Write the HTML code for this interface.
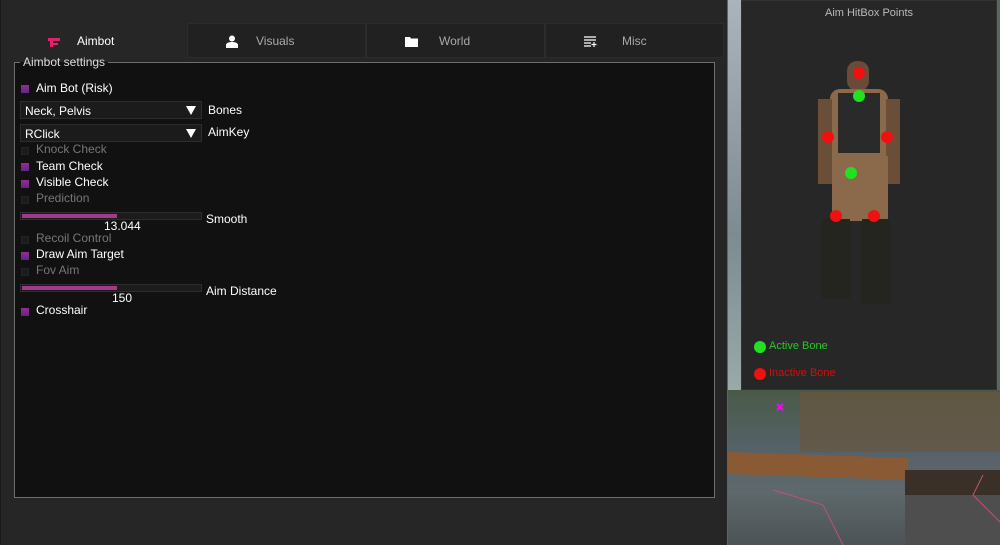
<!DOCTYPE html>
<html><head><meta charset="utf-8"><style>
*{margin:0;padding:0;box-sizing:border-box}
body{width:1000px;height:545px;overflow:hidden;position:relative;background:#5a6660;font-family:"Liberation Sans",sans-serif;font-size:12px;color:#fff}
.abs{position:absolute}
#main{left:0;top:0;width:727px;height:545px;background:#262626;border-left:1px solid #1a1a1a}
.tab{position:absolute;top:23px;height:35px;background:#212121;border:1px solid #2c2c2c;color:#aaa;font-size:12px}
.tab span{position:absolute;top:10px}
#grp{left:14px;top:62px;width:701px;height:436px;background:#111;border:1px solid #6e6e6e}
#grpt{left:20px;top:55px;padding:0 3px;font-size:12px;color:#ddd;background:linear-gradient(#262626 50%,#111 50%)}
.cb{position:absolute;left:21px;width:8px;height:8px}
.on{background:linear-gradient(#9a2a8a,#5a2a8a)}
.off{background:#1c1c1c;border:1px solid #242424}
.lb{position:absolute;left:36px;font-size:12px}
.dim{color:#777}
.dd{position:absolute;left:20px;width:182px;height:18px;background:#1b1b1b;border:1px solid #2d2d2d;padding:2px 4px;font-size:12px}
.dd i{position:absolute;right:5px;top:4px;width:0;height:0;border-left:5px solid transparent;border-right:5px solid transparent;border-top:9px solid #fff}
.sl{position:absolute;left:20px;width:182px;height:8px;background:#1c1c1c;border:1px solid #2d2d2d}
.sl b{position:absolute;left:1px;top:1px;width:95px;height:4px;background:#a03a8a}
#rp{left:741px;top:0;width:256px;height:390px;background:#272727;border:1px solid #333}
.dot{position:absolute;width:12px;height:12px;border-radius:50%}
.g{background:#1fe31f}.r{background:#f01010}
</style></head><body>
<div class="abs" style="left:728px;top:0;width:14px;height:390px;background:linear-gradient(#aab4bc,#7e8b90 60%,#9aa 100%)"></div>
<div class="abs" style="left:728px;top:390px;width:272px;height:155px;background:linear-gradient(#4a5a48,#56626a 40%,#606a6c 70%,#3a3e40)"></div>
<div class="abs" style="left:800px;top:392px;width:200px;height:60px;background:#6a5540;opacity:.7"></div>
<div class="abs" style="left:728px;top:455px;width:180px;height:22px;background:#8a5a34;transform:skewY(2deg)"></div>
<div class="abs" style="left:905px;top:470px;width:95px;height:75px;background:#3a3028"></div>
<div class="abs" style="left:728px;top:495px;width:272px;height:50px;background:#5a6266;opacity:.6"></div>

<div id="main" class="abs">
<div class="tab" style="left:5px;width:181px;background:#262626;border-color:#262626;color:#fff"><svg class="abs" style="left:40px;top:13px" width="14" height="10"><path d="M1 1h12v3H6v2h5v2H6v2H3V4H1z" fill="#e0226a"/></svg><span style="left:70px">Aimbot</span></div>
<div class="tab" style="left:186px;width:179px"><svg class="abs" style="left:38px;top:11px" width="12" height="13"><circle cx="6" cy="3.5" r="3" fill="#fff"/><path d="M0 13v-3c0-2 3-3 6-3s6 1 6 3v3z" fill="#fff"/></svg><span style="left:68px">Visuals</span></div>
<div class="tab" style="left:365px;width:179px"><svg class="abs" style="left:38px;top:12px" width="13" height="11"><path d="M0 1h5l1 1.5h7V11H0z" fill="#fff"/></svg><span style="left:72px">World</span></div>
<div class="tab" style="left:544px;width:179px"><svg class="abs" style="left:38px;top:12px" width="13" height="11"><path d="M0 1h12M0 4h12M0 7h7M0 10h7M10 6v5M7.5 8.5h5" stroke="#fff" stroke-width="1.2"/></svg><span style="left:76px">Misc</span></div>
</div>
<div id="grp" class="abs"></div>
<div id="grpt" class="abs">Aimbot settings</div>

<div class="cb on" style="top:85px"></div><div class="lb" style="top:81px">Aim Bot (Risk)</div>
<div class="dd" style="top:101px">Neck, Pelvis<i></i></div><div class="lb" style="left:208px;top:103px">Bones</div>
<div class="dd" style="top:124px">RClick<i></i></div><div class="lb" style="left:208px;top:125px">AimKey</div>
<div class="cb off" style="top:147px"></div><div class="lb dim" style="top:142px">Knock Check</div>
<div class="cb on" style="top:163px"></div><div class="lb" style="top:159px">Team Check</div>
<div class="cb on" style="top:180px"></div><div class="lb" style="top:175px">Visible Check</div>
<div class="cb off" style="top:196px"></div><div class="lb dim" style="top:191px">Prediction</div>
<div class="sl" style="top:212px"><b></b></div><div class="lb" style="left:206px;top:212px">Smooth</div>
<div class="lb" style="left:104px;top:219px">13.044</div>
<div class="cb off" style="top:236px"></div><div class="lb dim" style="top:231px">Recoil Control</div>
<div class="cb on" style="top:252px"></div><div class="lb" style="top:247px">Draw Aim Target</div>
<div class="cb off" style="top:268px"></div><div class="lb dim" style="top:263px">Fov Aim</div>
<div class="sl" style="top:284px"><b></b></div><div class="lb" style="left:206px;top:284px">Aim Distance</div>
<div class="lb" style="left:112px;top:291px">150</div>
<div class="cb on" style="top:308px"></div><div class="lb" style="top:303px">Crosshair</div>

<div id="rp" class="abs">
<div class="abs" style="left:0;top:6px;width:254px;text-align:center;color:#bbb;font-size:11px">Aim HitBox Points</div>
<div class="abs" style="left:105px;top:60px;width:22px;height:30px;border-radius:10px;background:#6a4a38"></div>
<div class="abs" style="left:88px;top:88px;width:58px;height:70px;border-radius:10px 10px 0 0;background:#8a6a4a"></div>
<div class="abs" style="left:96px;top:92px;width:42px;height:60px;background:#2a2a2a"></div>
<div class="abs" style="left:76px;top:98px;width:14px;height:85px;background:#6a4e38"></div>
<div class="abs" style="left:144px;top:98px;width:14px;height:85px;background:#6a4e38"></div>
<div class="abs" style="left:90px;top:155px;width:56px;height:65px;background:#8a6a4a"></div>
<div class="abs" style="left:80px;top:218px;width:28px;height:80px;background:#252520"></div>
<div class="abs" style="left:120px;top:218px;width:28px;height:85px;background:#252520"></div>
<div class="dot r" style="left:111px;top:66px"></div>
<div class="dot g" style="left:111px;top:89px"></div>
<div class="dot r" style="left:80px;top:130px"></div>
<div class="dot r" style="left:139px;top:130px"></div>
<div class="dot g" style="left:103px;top:166px"></div>
<div class="dot r" style="left:88px;top:209px"></div>
<div class="dot r" style="left:126px;top:209px"></div>
<div class="dot g" style="left:12px;top:340px"></div><div class="abs" style="left:27px;top:339px;color:#22cc22;font-size:11px">Active Bone</div>
<div class="dot r" style="left:12px;top:367px"></div><div class="abs" style="left:27px;top:366px;color:#cc1111;font-size:11px">Inactive Bone</div>
</div>
<svg class="abs" style="left:728px;top:390px" width="272" height="155"><path d="M55 20l-6-6m0 6l6-6" stroke="#f0f" stroke-width="2"/><path d="M255 85l-10 20 30 30M45 100l50 15 20 40" stroke="#c0507a" fill="none"/></svg>
</body></html>
